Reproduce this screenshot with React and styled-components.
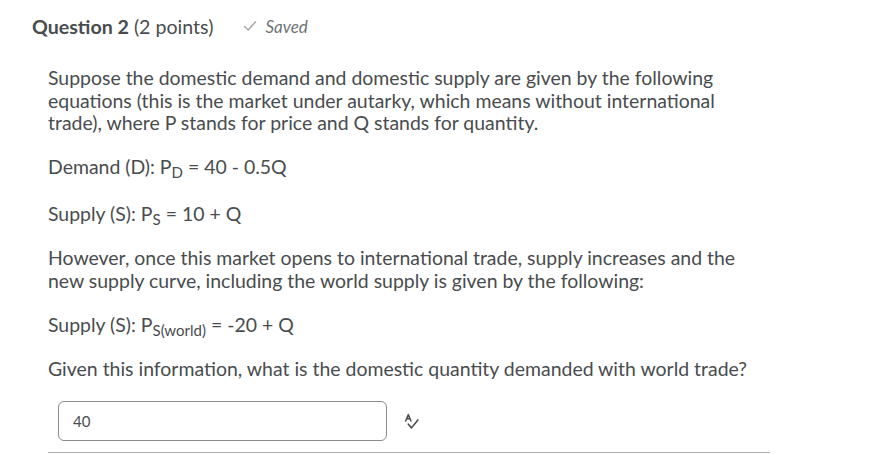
import React from 'react'
import styled, { createGlobalStyle } from 'styled-components'

const GlobalStyle = createGlobalStyle`
  html, body {
    margin: 0;
    padding: 0;
    background: #ffffff;
  }
  body {
    font-family: Lato, "Noto Sans", sans-serif;
    color: #494c4e;
  }
`

const App = () => {
  return (
    <>
      <GlobalStyle />
      <Page>
        <Header>
          <Title>
            <strong>Question 2</strong> (2 points)
          </Title>
          <SavedTag>
            <svg width="14" height="12" viewBox="0 0 14 12" fill="none">
              <path d="M1.5 6.5 L5.2 10 L12.5 1.8" stroke="#a8abae" strokeWidth="1.6" strokeLinecap="round" strokeLinejoin="round" />
            </svg>
            Saved
          </SavedTag>
        </Header>
        <Body>
          <Para>
            Suppose the domestic demand and domestic supply are given by the following
            equations (this is the market under autarky, which means without international
            trade), where P stands for price and Q stands for quantity.
          </Para>
          <Para $gap="24.5px">
            Demand (D): P<Sub>D</Sub> = 40 - 0.5Q
          </Para>
          <Para $gap="21.5px">
            Supply (S): P<Sub>S</Sub> = 10 + Q
          </Para>
          <Para>
            However, once this market opens to international trade, supply increases and the
            new supply curve, including the world supply is given by the following:
          </Para>
          <Para>
            Supply (S): P<Sub>S(world)</Sub> = -20 + Q
          </Para>
          <Para $gap="21px">
            Given this information, what is the domestic quantity demanded with world trade?
          </Para>
          <AnswerRow>
            <AnswerInput defaultValue="40" />
            <SpellIcon viewBox="0 0 16 16" width="17" height="17">
              <path d="M2.5 7.5 L5 1.5 L7.5 7.5 M3.4 5.4 H6.6" stroke="#494c4e" strokeWidth="1.4" fill="none" strokeLinejoin="round" strokeLinecap="round" />
              <path d="M5 10.5 L8 14 L14 6.5" stroke="#494c4e" strokeWidth="1.5" fill="none" strokeLinejoin="round" strokeLinecap="round" />
            </SpellIcon>
          </AnswerRow>
          <Divider />
        </Body>
      </Page>
    </>
  )
}

const Page = styled.div`
  width: 870px;
  height: 455px;
  overflow: hidden;
  box-sizing: border-box;
  padding: 13px 0 0 32px;
`

const Header = styled.div`
  display: flex;
  align-items: center;
  gap: 30px;
  height: 26px;
`

const Title = styled.h2`
  margin: 0;
  font-size: 19.6px;
  font-weight: 400;
  color: #494c4e;
  strong {
    font-weight: 700;
  }
`

const SavedTag = styled.span`
  display: flex;
  align-items: center;
  gap: 8px;
  font-size: 17px;
  font-style: italic;
  color: #6e7376;
`

const Body = styled.div`
  padding: 28px 0 0 16px;
  width: 722px;
`

const Para = styled.p`
  margin: 0 0 ${p => p.$gap || '21.5px'} 0;
  width: 712px;
  font-size: 19.45px;
  line-height: 22.5px;
  color: #494c4e;
`

const Sub = styled.sub`
  font-size: 15px;
  line-height: 0;
  vertical-align: -4px;
`

const AnswerRow = styled.div`
  display: flex;
  align-items: center;
  gap: 16px;
  margin-left: 10px;
`

const AnswerInput = styled.input`
  width: 329px;
  height: 40px;
  box-sizing: border-box;
  border: 1px solid #868c8f;
  border-radius: 6px;
  padding: 0 14px;
  font-family: Lato, "Noto Sans", sans-serif;
  font-size: 15px;
  color: #494c4e;
  outline: none;
`

const SpellIcon = styled.svg`
  display: block;
`

const Divider = styled.div`
  margin-top: 11px;
  height: 1px;
  background: #a9acaf;
`

export default App
